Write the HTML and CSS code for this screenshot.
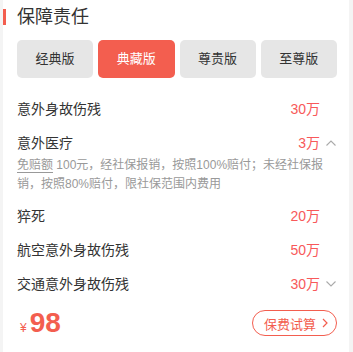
FILE: index.html
```html
<!DOCTYPE html>
<html lang="zh-CN">
<head>
<meta charset="utf-8">
<title>保障责任</title>
<link rel="stylesheet" href="styles.css">
</head>
<body>
<div class="card">
  <div class="title"><span class="bar"></span><span class="title-text">保障责任</span></div>
  <div class="tabs">
    <div class="tab">经典版</div>
    <div class="tab active">典藏版</div>
    <div class="tab">尊贵版</div>
    <div class="tab">至尊版</div>
  </div>
  <div class="list">
    <div class="row">
      <span class="label">意外身故伤残</span><span class="value">30万</span><span class="slot"></span>
    </div>
    <div class="row row-open">
      <span class="label">意外医疗</span><span class="value">3万</span>
      <span class="slot"><svg width="10" height="6" viewBox="0 0 10 6"><polyline points="0.5,5.5 5,1 9.5,5.5" fill="none" stroke="#aaa" stroke-width="1.1"/></svg></span>
    </div>
    <p class="desc"><u class="ul">免赔额</u> 100元，经社保报销，按照100%赔付；未经社保报销，按照80%赔付，限社保范围内费用</p>
    <div class="row">
      <span class="label">猝死</span><span class="value">20万</span><span class="slot"></span>
    </div>
    <div class="row">
      <span class="label">航空意外身故伤残</span><span class="value">50万</span><span class="slot"></span>
    </div>
    <div class="row">
      <span class="label">交通意外身故伤残</span><span class="value">30万</span>
      <span class="slot"><svg width="10" height="6" viewBox="0 0 10 6"><polyline points="0.5,0.5 5,5 9.5,0.5" fill="none" stroke="#aaa" stroke-width="1.1"/></svg></span>
    </div>
  </div>
  <div class="footer">
    <div class="price"><span class="yen">¥</span><span class="num">98</span></div>
    <div class="btn">保费试算<svg width="6" height="10" viewBox="0 0 6 10"><polyline points="1,1 5,5 1,9" fill="none" stroke="#f35e4f" stroke-width="1.2"/></svg></div>
  </div>
</div>
</body>
</html>
```

FILE: styles.css
```css
html, body {
  margin: 0;
  padding: 0;
  background: #f4f4f4;
}
body {
  font-family: "Liberation Sans", "Noto Sans CJK SC", sans-serif;
  color: #333;
}
.card {
  background: #fff;
  margin: 0 4px 0 3px;
  height: 352px;
  box-sizing: border-box;
  padding: 8px 12px 0 14px;
}
.title {
  display: flex;
  align-items: center;
  height: 18px;
  margin-left: -14px;
}
.bar {
  width: 3px;
  height: 16px;
  background: #f35e4f;
  margin-right: 11px;
}
.title-text {
  font-size: 18px;
  line-height: 18px;
  color: #333;
}
.tabs {
  display: grid;
  grid-template-columns: repeat(4, 1fr);
  column-gap: 5px;
  margin-top: 14px;
}
.tab {
  height: 38px;
  line-height: 38px;
  text-align: center;
  background: #e6e6e6;
  border-radius: 5px;
  font-size: 13px;
  color: #333;
}
.tab.active {
  background: #f35e4f;
  color: #fff;
}
.list {
  margin-top: 14px;
}
.row {
  display: flex;
  align-items: center;
  padding: 7px 0;
  line-height: 20px;
  font-size: 14px;
}
.row-open {
  padding-bottom: 0;
}
.label {
  flex: 1;
  color: #333;
}
.value {
  color: #f8595a;
}
.slot {
  width: 11px;
  margin-left: 6px;
  display: flex;
  align-items: center;
}
.slot svg {
  display: block;
}
.desc {
  font-size: 12px;
  line-height: 19px;
  color: #999;
  margin: 3px 8px 5px 0;
}
.ul {
  text-decoration: underline;
  text-underline-offset: 3px;
}
.footer {
  display: flex;
  align-items: center;
  justify-content: space-between;
  margin-top: 8px;
  height: 28px;
}
.price {
  display: flex;
  align-items: baseline;
  color: #f35e4f;
  padding-left: 3px;
}
.yen {
  font-size: 12px;
  margin-right: 3px;
}
.num {
  font-size: 28px;
  font-weight: bold;
  line-height: 28px;
}
.btn {
  display: flex;
  align-items: center;
  height: 24px;
  border: 1px solid #f35e4f;
  border-radius: 13px;
  padding: 0 8px 0 11px;
  font-size: 13px;
  color: #f35e4f;
  gap: 6px;
}
.btn svg {
  display: block;
}
```
